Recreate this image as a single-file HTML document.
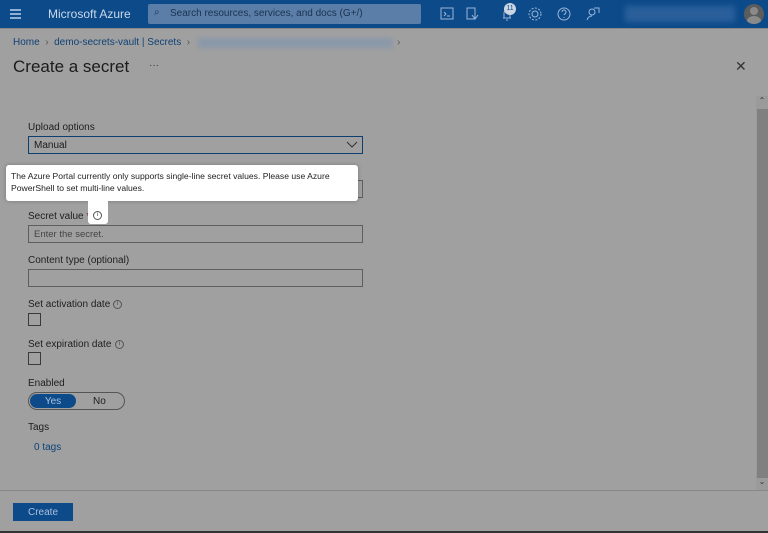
<!DOCTYPE html>
<html><head><meta charset="utf-8"><style>
*{margin:0;padding:0;box-sizing:border-box}
body{width:768px;height:533px;overflow:hidden;background:#a0a0a0;font-family:"Liberation Sans",sans-serif;position:relative;color:#1b1b1b}
.a{position:absolute}
.hdr{left:0;top:0;width:768px;height:28px;background:#0c4a8a}
.lbl{font-size:10px;color:#1e1e1e}
.inp{height:18px;border:1px solid #5e5e5e;background:#a0a0a0;width:335px;left:28px}
.ic{width:9px;height:9px;border:1px solid #555;border-radius:50%;font-size:6px;text-align:center;line-height:7px;color:#444}
.cb{width:13px;height:13px;border:1px solid #3a3a3a;left:28px}
</style></head><body>
<div class="a hdr"></div>
<div class="a" style="left:10px;top:9px;width:11px;height:2px;background:#8fb0d4;box-shadow:0 4px 0 #8fb0d4,0 8px 0 #8fb0d4"></div>
<div class="a" style="left:48px;top:7px;font-size:12px;color:#c9d8ea">Microsoft Azure</div>
<div class="a" style="left:148px;top:4px;width:273px;height:20px;background:#5a7ea8;border-radius:2px"></div>
<div class="a" style="left:154px;top:7px;font-size:10px;color:#1c3250">⌕</div>
<div class="a" style="left:170px;top:8px;font-size:10px;color:#1c3250">Search resources, services, and docs (G+/)</div>
<svg class="a" style="left:440px;top:6px" width="160" height="16" fill="none" stroke="#9ab5d6" stroke-width="1">
<rect x="1" y="2" width="12" height="11"/><path d="M4 6l2 2-2 2M7 10h3"/>
<rect x="27" y="2" width="8" height="11"/><path d="M32 9l3 4 3-4"/>
<path d="M63 12h8M64 12v-5a3 3 0 016 0v5M66 14h2"/>
<circle cx="95" cy="8" r="3"/><circle cx="95" cy="8" r="6" stroke-dasharray="2 1.5"/>
<circle cx="124" cy="8" r="6"/><path d="M122 6a2 2 0 114 0c0 2-2 2-2 3M124 11v1"/>
<circle cx="152" cy="6" r="3"/><path d="M147 14c1-3 3-4 5-4M154 2h5v5"/>
</svg>
<div class="a" style="left:504px;top:3px;width:12px;height:12px;border-radius:50%;background:#ccd6e2;font-size:7px;text-align:center;line-height:12px;color:#0c4a8a">11</div>
<div class="a" style="left:625px;top:6px;width:110px;height:16px;background:#2a5f9a;filter:blur(3px)"></div>
<div class="a" style="left:744px;top:4px;width:20px;height:20px;border-radius:50%;background:#5c5c5c;overflow:hidden"><div class="a" style="left:6px;top:3px;width:8px;height:8px;border-radius:50%;background:#8a8a8a"></div><div class="a" style="left:3px;top:12px;width:14px;height:10px;border-radius:50%;background:#8a8a8a"></div></div>
<div class="a" style="left:0;top:28px;width:768px;height:1px;background:#888"></div>
<div class="a" style="left:13px;top:37px;font-size:10px;color:#0e4276">Home <span style="color:#555">&nbsp;›&nbsp;</span> demo-secrets-vault | Secrets <span style="color:#555">&nbsp;›</span></div>
<div class="a" style="left:198px;top:38px;width:195px;height:10px;background:#8a98aa;filter:blur(2px)"></div>
<div class="a" style="left:397px;top:37px;font-size:10px;color:#555">›</div>
<div class="a" style="left:13px;top:57px;font-size:17px;color:#1b1b1b">Create a secret</div>
<div class="a" style="left:149px;top:60px;font-size:10px;color:#333">···</div>
<div class="a" style="left:735px;top:58px;font-size:14px;color:#333">✕</div>
<div class="a lbl" style="left:28px;top:122px">Upload options</div>
<div class="a inp" style="top:136px;border:1px solid #0d3f70;height:18px"><span style="position:absolute;left:5px;top:3px;font-size:10px">Manual</span><svg style="position:absolute;right:4px;top:4px" width="12" height="8"><path d="M1 1l5 5 5-5" stroke="#333" fill="none"/></svg></div>
<div class="a inp" style="top:180px"></div>
<div class="a lbl" style="left:28px;top:211px">Secret value <span style="color:#7a1010">*</span></div>
<div class="a inp" style="top:225px"><span style="position:absolute;left:5px;top:3px;font-size:9.5px;color:#444">Enter the secret.</span></div>
<div class="a lbl" style="left:28px;top:255px">Content type (optional)</div>
<div class="a inp" style="top:269px"></div>
<div class="a lbl" style="left:28px;top:299px">Set activation date</div>
<div class="a ic" style="left:113px;top:300px">i</div>
<div class="a cb" style="top:313px"></div>
<div class="a lbl" style="left:28px;top:339px">Set expiration date</div>
<div class="a ic" style="left:115px;top:340px">i</div>
<div class="a cb" style="top:352px"></div>
<div class="a lbl" style="left:28px;top:378px">Enabled</div>
<div class="a" style="left:28px;top:392px;width:97px;height:18px;border:1px solid #555;border-radius:9px"></div>
<div class="a" style="left:30px;top:394px;width:46px;height:14px;background:#0c4a8a;border-radius:7px;font-size:10px;color:#aac1de;text-align:center;line-height:14px;padding-top:1px">Yes</div>
<div class="a lbl" style="left:93px;top:396px">No</div>
<div class="a lbl" style="left:28px;top:422px">Tags</div>
<div class="a" style="left:34px;top:442px;font-size:10px;color:#0e4276">0 tags</div>
<div class="a" style="left:756px;top:96px;width:12px;height:394px;background:#9a9a9a"></div>
<div class="a" style="left:757px;top:109px;width:11px;height:369px;background:#808080"></div>
<div class="a" style="left:756px;top:96px;width:12px;height:13px;font-size:8px;text-align:center;color:#333">⌃</div>
<div class="a" style="left:756px;top:477px;width:12px;height:13px;font-size:8px;text-align:center;color:#333">⌄</div>
<div class="a" style="left:0;top:490px;width:768px;height:1px;background:#888"></div>
<div class="a" style="left:13px;top:503px;width:60px;height:18px;background:#0c4a8a;font-size:10px;color:#aac1de;text-align:center;line-height:18px;padding-top:1px">Create</div>
<div class="a" style="left:0;top:531px;width:768px;height:2px;background:#333"></div>
<div class="a" style="left:6px;top:165px;width:352px;height:36px;background:#fff;border-radius:3px;box-shadow:0 0 4px rgba(0,0,0,.25);font-size:8.6px;line-height:12px;padding:5px 5px;color:#222">The Azure Portal currently only supports single-line secret values. Please use Azure PowerShell to set multi-line values.</div>
<div class="a" style="left:88px;top:200px;width:20px;height:24px;background:#fff;border-radius:0 0 3px 3px"></div>
<div class="a ic" style="left:93px;top:211px">i</div>
</body></html>
